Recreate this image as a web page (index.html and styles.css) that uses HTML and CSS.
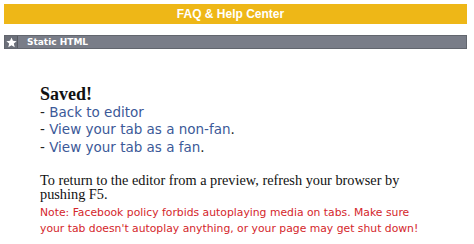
FILE: index.html
```html
<!DOCTYPE html>
<html>
<head>
<meta charset="utf-8">
<link rel="stylesheet" href="styles.css">
</head>
<body>
<div class="page">
  <div class="faq-bar">FAQ &amp; Help Center</div>
  <div class="section-bar">
    <span class="star-cell"><svg width="11" height="11" viewBox="0 0 24 24"><path fill="#fff" d="M12 1l3.2 7.4 8 .7-6.1 5.3 1.9 7.9L12 18.1l-7 4.2 1.9-7.9L.8 9.1l8-.7z"/></svg></span>
    <span class="section-title">Static HTML</span>
  </div>
  <div class="content">
    <h2 class="saved">Saved!</h2>
    <ul class="links">
      <li>- <a href="#">Back to editor</a></li>
      <li>- <a href="#">View your tab as a non-fan</a>.</li>
      <li>- <a href="#">View your tab as a fan</a>.</li>
    </ul>
    <p class="info">To return to the editor from a preview, refresh your browser by pushing F5.</p>
    <p class="note">Note: Facebook policy forbids autoplaying media on tabs. Make sure your tab doesn't autoplay anything, or your page may get shut down!</p>
  </div>
</div>
</body>
</html>
```
FILE: styles.css
```css
html, body {
  margin: 0;
  padding: 0;
  background: #fff;
}
.page {
  padding: 4px 7px 0 4px;
}
.faq-bar {
  background: #eeb717;
  color: #fff;
  font-family: "Liberation Sans", Arial, sans-serif;
  font-weight: bold;
  font-size: 12px;
  height: 20px;
  line-height: 21px;
  text-align: center;
  padding-right: 10px;
}
.section-bar {
  margin-top: 11px;
  display: flex;
  align-items: stretch;
  height: 12px;
  background: #797d88;
  border: 1px solid #62666e;
}
.star-cell {
  width: 12px;
  background: #6b6f79;
  border-right: 1px solid #575a62;
  display: flex;
  align-items: center;
  justify-content: center;
}
.star-cell svg {
  display: block;
}
.section-title {
  color: #fff;
  font-family: "DejaVu Sans", Verdana, sans-serif;
  font-weight: bold;
  font-size: 9px;
  line-height: 12px;
  padding-left: 9px;
}
.content {
  width: 384px;
  padding-left: 36px;
  padding-top: 35px;
}
.saved {
  margin: 0;
  font-family: "Liberation Serif", "Times New Roman", serif;
  font-weight: bold;
  font-size: 18px;
  line-height: 20px;
  color: #111;
}
.links {
  list-style: none;
  margin: 0;
  padding: 0;
  font-family: "DejaVu Sans", "Lucida Grande", sans-serif;
  font-size: 13.5px;
  line-height: 17.3px;
  color: #222;
}
.links a {
  color: #3b5998;
  text-decoration: none;
}
.info {
  margin: 17px 0 0 0;
  font-family: "Liberation Serif", "Times New Roman", serif;
  font-size: 14.3px;
  line-height: 14px;
  color: #111;
}
.note {
  margin: 4.5px 0 0 0;
  font-family: "DejaVu Sans", Verdana, sans-serif;
  font-size: 10.8px;
  line-height: 15.5px;
  color: #d4262b;
}
```
